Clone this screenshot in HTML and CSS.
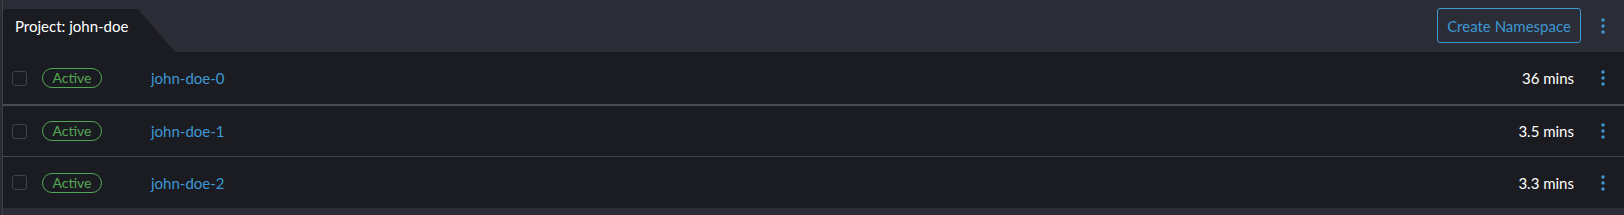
FILE: index.html
```html
<!DOCTYPE html>
<html lang="en">
<head>
  <meta charset="UTF-8">
  <title>Namespaces</title>
  <link rel="stylesheet" href="styles.css">
</head>
<body>
  <div class="table">
    <div class="group-head">
      <div class="group-tab">Project: john-doe</div>
      <div class="group-actions">
        <button class="btn-outline">Create Namespace</button>
        <span class="kebab">
          <svg width="4" height="16" viewBox="0 0 4 16"><circle cx="2" cy="2" r="1.7"/><circle cx="2" cy="8" r="1.7"/><circle cx="2" cy="14" r="1.7"/></svg>
        </span>
      </div>
    </div>

    <div class="row first">
      <span class="check"></span>
      <span class="badge">Active</span>
      <a class="name" href="#">john-doe-0</a>
      <span class="age">36 mins</span>
      <span class="kebab">
        <svg width="4" height="16" viewBox="0 0 4 16"><circle cx="2" cy="2" r="1.7"/><circle cx="2" cy="8" r="1.7"/><circle cx="2" cy="14" r="1.7"/></svg>
      </span>
    </div>
    <div class="row">
      <span class="check"></span>
      <span class="badge">Active</span>
      <a class="name" href="#">john-doe-1</a>
      <span class="age">3.5 mins</span>
      <span class="kebab">
        <svg width="4" height="16" viewBox="0 0 4 16"><circle cx="2" cy="2" r="1.7"/><circle cx="2" cy="8" r="1.7"/><circle cx="2" cy="14" r="1.7"/></svg>
      </span>
    </div>
    <div class="row">
      <span class="check"></span>
      <span class="badge">Active</span>
      <a class="name" href="#">john-doe-2</a>
      <span class="age">3.3 mins</span>
      <span class="kebab">
        <svg width="4" height="16" viewBox="0 0 4 16"><circle cx="2" cy="2" r="1.7"/><circle cx="2" cy="8" r="1.7"/><circle cx="2" cy="14" r="1.7"/></svg>
      </span>
    </div>
    <div class="foot"></div>
  </div>
</body>
</html>
```

FILE: styles.css
```css
body {
  margin: 0;
  background: #2b2c35;
  font-family: Lato, "Open Sans", sans-serif;
  font-size: 15px;
  color: #fff;
}

.table {
  margin-left: 2px;
  border-left: 1px solid #3e3f47;
  height: 215px;
}

.group-head {
  display: flex;
  align-items: flex-start;
  height: 52px;
}

.group-tab {
  margin-top: 9px;
  height: 43px;
  width: 172px;
  box-sizing: border-box;
  padding: 8px 0 0 12px;
  background: #1b1c21;
  border-top-left-radius: 3px;
  clip-path: polygon(0 0, 135px 0, 172px 100%, 0 100%);
  line-height: 18px;
}

.group-actions {
  margin-left: auto;
  display: flex;
  align-items: center;
  padding-top: 8px;
  padding-right: 13px;
}

.btn-outline {
  width: 144px;
  height: 35px;
  background: transparent;
  border: 1px solid #3d98d3;
  border-radius: 3px;
  color: #3d98d3;
  font-family: inherit;
  font-size: 15px;
  padding: 0;
}

.kebab {
  display: flex;
  justify-content: center;
  width: 16px;
  margin-left: 14px;
  fill: #3d98d3;
}

.row .kebab {
  margin-left: 21px;
}

.row {
  display: flex;
  align-items: center;
  height: 51px;
  background: #1b1c21;
  border-top: 1px solid #44454c;
  padding-right: 13px;
}

.row.first {
  border-top: 0;
  height: 52px;
  border-bottom: 2px solid #4a4b52;
}

.row.first + .row {
  border-top: 0;
  height: 50px;
}

.check {
  width: 13px;
  height: 13px;
  margin-left: 9px;
  border: 1px solid #43444b;
  border-radius: 3px;
}

.badge {
  margin-left: 15px;
  width: 58px;
  height: 18px;
  border: 1px solid #54a654;
  border-radius: 10px;
  color: #54a654;
  text-align: center;
  line-height: 18px;
  font-size: 14px;
}

.name {
  margin-left: 49px;
  color: #3d98d3;
  text-decoration: none;
}

.age {
  flex: 1;
  text-align: right;
}
```
